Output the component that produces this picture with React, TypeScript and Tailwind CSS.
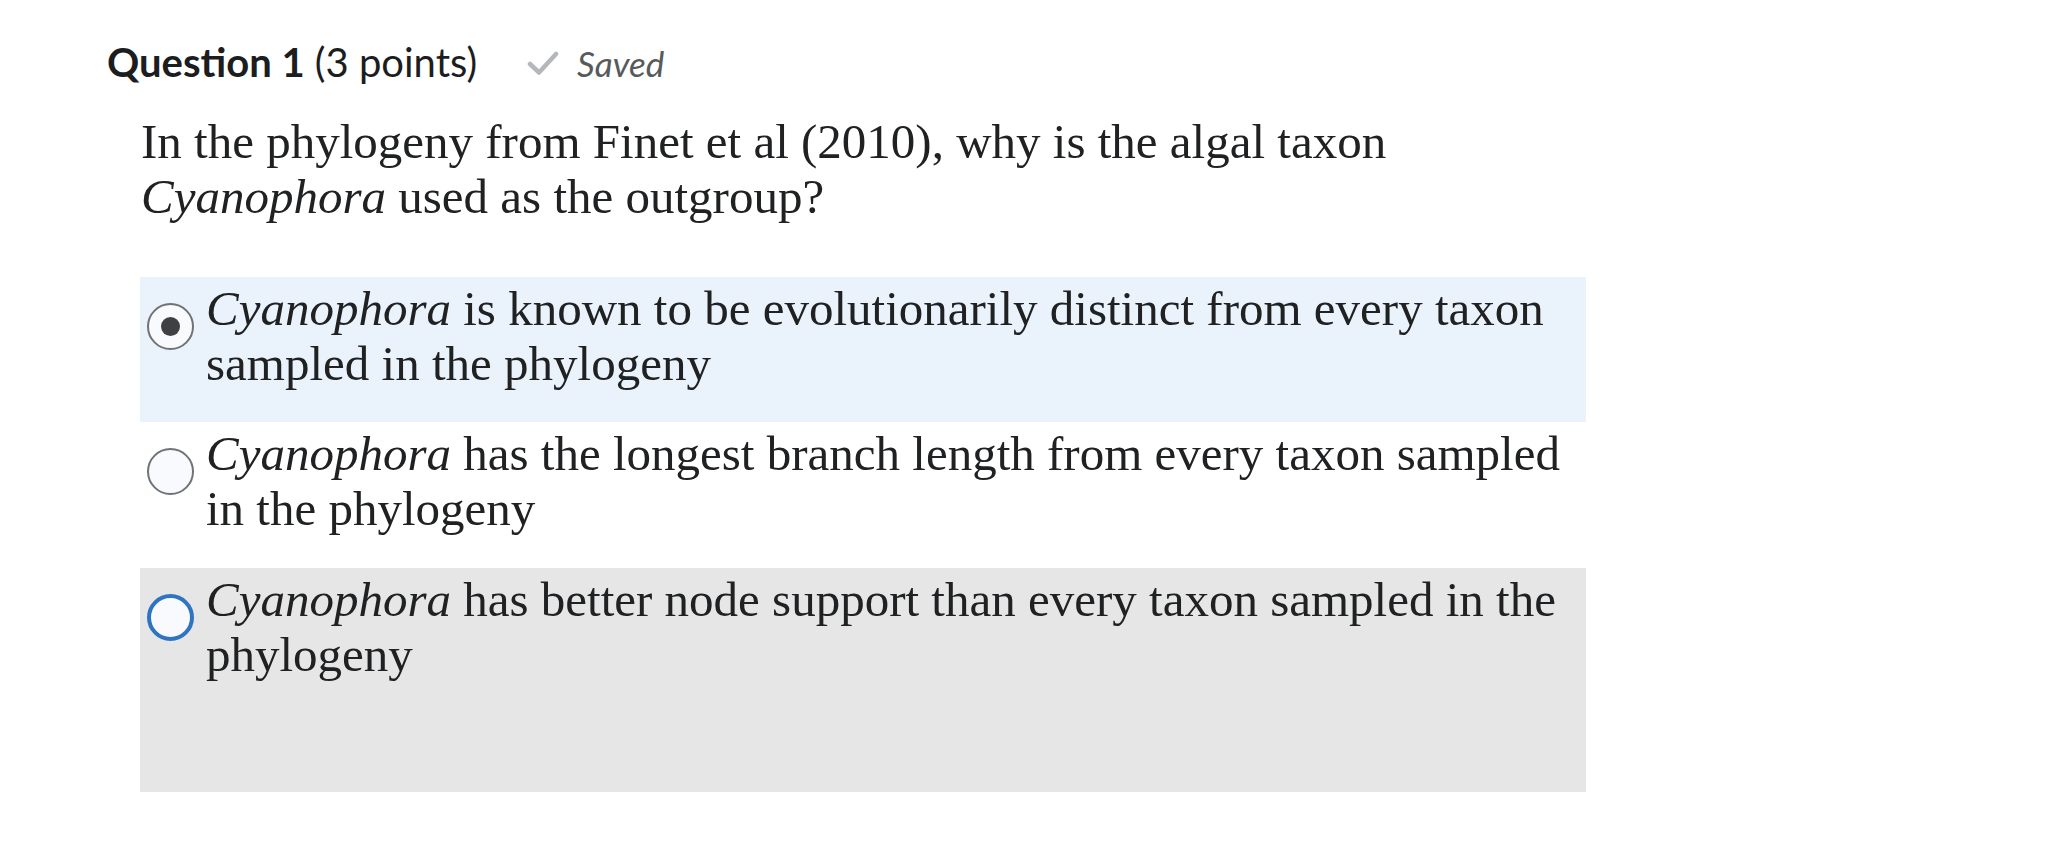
import React from "react";

const serif = { fontFamily: '"Liberation Serif", "Times New Roman", serif' };

function Radio({ state }: { state: "checked" | "empty" | "focus" }) {
  if (state === "focus") {
    return (
      <span className="mt-[22px] ml-[7px] w-[47px] h-[47px] shrink-0 rounded-full border-[4px] border-[#2f74c0] bg-[#f9fafd]" />
    );
  }
  return (
    <span className="mt-[22px] ml-[7px] w-[47px] h-[47px] shrink-0 rounded-full border-[2px] border-[#707375] bg-[#f9fafd] flex items-center justify-center">
      {state === "checked" && <span className="w-[19px] h-[19px] rounded-full bg-[#3f4043]" />}
    </span>
  );
}

function Option({
  state,
  bg,
  height,
  rest,
}: {
  state: "checked" | "empty" | "focus";
  bg: string;
  height: string;
  rest: string;
}) {
  return (
    <div className={`flex items-start pt-[4px] ${bg} ${height}`}>
      <Radio state={state} />
      <p
        className="ml-[12px] text-[49px] leading-[55px] text-[#202122] w-[1378px]"
        style={serif}
      >
        <i>Cyanophora</i> {rest}
      </p>
    </div>
  );
}

export default function App() {
  return (
    <div className="min-h-[862px] bg-white pl-[107px] pt-[40px]">
      {/* Header */}
      <div
        className="flex items-baseline text-[40px] leading-[44px] text-[#1c1d1f]"
        style={{ fontFamily: "Lato, sans-serif" }}
      >
        <span className="font-bold">Question 1</span>
        <span className="ml-[10px]">(3 points)</span>
        <span className="ml-[50px] flex items-baseline text-[#565a5c] italic text-[35px]">
          <svg width="32" height="26" viewBox="0 0 32 26" className="self-center mr-[18px]">
            <path d="M3 14 L12 22.5 L29 4" fill="none" stroke="#b3b8bb" strokeWidth="4.5" strokeLinecap="round" strokeLinejoin="round" />
          </svg>
          Saved
        </span>
      </div>

      {/* Question */}
      <p className="mt-[29px] ml-[34px] text-[49px] leading-[55px] text-[#202122] w-[1300px]" style={serif}>
        In the phylogeny from Finet et al (2010), why is the algal taxon <i>Cyanophora</i> used as the outgroup?
      </p>

      {/* Options */}
      <div className="mt-[53px] ml-[33px] w-[1446px] flex flex-col">
        <Option
          state="checked"
          bg="bg-[#eaf2fb]"
          height="h-[145px]"
          rest="is known to be evolutionarily distinct from every taxon sampled in the phylogeny"
        />
        <Option
          state="empty"
          bg="bg-white"
          height="h-[146px]"
          rest="has the longest branch length from every taxon sampled in the phylogeny"
        />
        <Option
          state="focus"
          bg="bg-[#e6e6e6]"
          height="h-[224px]"
          rest="has better node support than every taxon sampled in the phylogeny"
        />
      </div>
    </div>
  );
}
